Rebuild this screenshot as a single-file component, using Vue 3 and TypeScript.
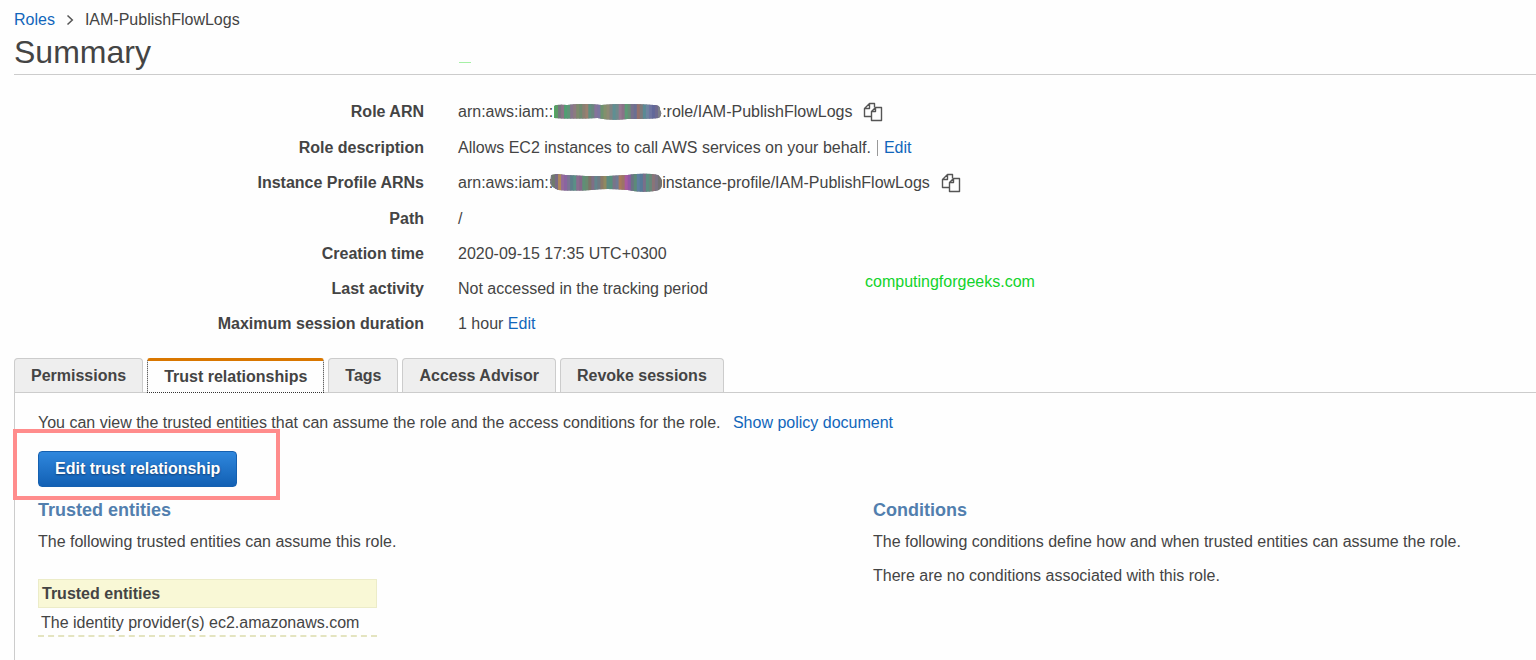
<script setup lang="ts">
interface Part {
  kind: 'text' | 'link' | 'redacted' | 'copy' | 'divider'
  text?: string
}
interface Row {
  label: string
  parts: Part[]
}

const rows: Row[] = [
  {
    label: 'Role ARN',
    parts: [
      { kind: 'text', text: 'arn:aws:iam::' },
      { kind: 'redacted' },
      { kind: 'text', text: ':role/IAM-PublishFlowLogs' },
      { kind: 'copy' },
    ],
  },
  {
    label: 'Role description',
    parts: [
      { kind: 'text', text: 'Allows EC2 instances to call AWS services on your behalf.' },
      { kind: 'divider' },
      { kind: 'link', text: 'Edit' },
    ],
  },
  {
    label: 'Instance Profile ARNs',
    parts: [
      { kind: 'text', text: 'arn:aws:iam::' },
      { kind: 'redacted' },
      { kind: 'text', text: 'instance-profile/IAM-PublishFlowLogs' },
      { kind: 'copy' },
    ],
  },
  { label: 'Path', parts: [{ kind: 'text', text: '/' }] },
  { label: 'Creation time', parts: [{ kind: 'text', text: '2020-09-15 17:35 UTC+0300' }] },
  { label: 'Last activity', parts: [{ kind: 'text', text: 'Not accessed in the tracking period' }] },
  {
    label: 'Maximum session duration',
    parts: [
      { kind: 'text', text: '1 hour\u00a0' },
      { kind: 'link', text: 'Edit' },
    ],
  },
]

const tabs: string[] = ['Permissions', 'Trust relationships', 'Tags', 'Access Advisor', 'Revoke sessions']
const activeTab = 'Trust relationships'

const stripes: Record<number, string[]> = {
  0: [
    '#4fae62', '#5c9a66', '#76757f', '#8a7486', '#4f9f72', '#5f9478', '#86758c', '#8d7a80', '#7d8a6c',
    '#6f8a70', '#8a7f72', '#9a8070', '#5f8f80', '#6a857f', '#85739a', '#7a76a0', '#6d9270', '#83906c',
    '#8e8a74', '#7f8484', '#5f8f93', '#6f8a8c', '#947a90', '#8a7288', '#5d9a76', '#6c8a78', '#77708c',
    '#6a6f93', '#94706c', '#7d7a7c', '#5a8a94', '#6f84a0', '#6e74a0', '#62689a', '#6f6a90', '#7d8088',
  ],
  2: [
    '#6f7a6c', '#7a6a86', '#b0885a', '#946a9a', '#8a64a0', '#7a7494', '#5c7f8a', '#5a8f86', '#8a6c90',
    '#84688a', '#5f8f76', '#6a8a70', '#7d7468', '#7f6f86', '#62858c', '#6f7a84', '#8a7a68', '#8f8a60',
    '#5c8a80', '#56907c', '#7a7488', '#6f7a94', '#a87a5c', '#9c7466', '#a85aa0', '#9058a4', '#6a7484',
    '#5c8a78', '#5f7fa0', '#567a98', '#7a6f8a', '#5a8f80', '#68877a', '#8a7478', '#7a7484', '#717171',
  ],
}
</script>

<template>
  <main class="page">
    <nav class="breadcrumb" aria-label="Breadcrumb">
      <a href="#">Roles</a>
      <svg class="chevron" viewBox="0 0 8 12" aria-hidden="true"><path d="M1.500 1.500 6.300 6 1.500 10.500" /></svg>
      <span>IAM-PublishFlowLogs</span>
    </nav>
    <header class="heading">
      <h1>Summary</h1>
      <span class="mark"></span>
    </header>

    <section class="details">
      <dl>
        <template v-for="(row, r) in rows" :key="row.label">
          <dt>{{ row.label }}</dt>
          <dd :class="{ arn: row.parts.length === 4 }">
            <template v-for="(part, i) in row.parts" :key="i">
              <span v-if="part.kind === 'text'">{{ part.text }}</span>
              <a v-else-if="part.kind === 'link'" href="#">{{ part.text }}</a>
              <span v-else-if="part.kind === 'divider'" class="divider"></span>
              <svg v-else-if="part.kind === 'redacted'" class="redacted" viewBox="0 0 108 20" preserveAspectRatio="none" aria-hidden="true">
                <clipPath :id="'blot' + r">
                  <path v-if="r === 0" d="M1 4Q4 2 14 3Q30 1 48 3Q70 1 100 3Q107 3 106 8Q109 12 105 16Q92 17 74 17Q56 19 44 16Q20 17 1 16Z" />
                  <path v-else d="M-2 2L4 1Q20 3 44 3Q66 3 82 1Q96 0 104 2Q109 6 108 11Q108 17 101 18Q86 20 74 17Q52 15 38 17Q20 18 5 17Q-2 14 -3 10Z" />
                </clipPath>
                <g :clip-path="`url(#blot${r})`">
                  <rect x="-4" y="0" width="112" height="20" fill="#77777f" />
                  <rect v-for="(color, s) in stripes[r]" :key="s" :x="s * 3 - 1" y="0" width="4" height="20" :fill="color" />
                </g>
              </svg>
              <button v-else class="copy" type="button" aria-label="Copy ARN">
                <svg viewBox="0 0 20 20" aria-hidden="true">
                  <path d="M8 14.500H1.500V6.500L6.500 1.500H11.500V5.500M6.500 1.500V6.500H1.500" />
                  <path d="M12.500 5.500H18.500V18.500H8.500V9.500L12.500 5.500V9.500H8.500" />
                </svg>
              </button>
            </template>
          </dd>
        </template>
      </dl>
      <span class="watermark">computingforgeeks.com</span>
    </section>

    <div class="tabs" role="tablist">
      <button v-for="tab in tabs" :key="tab" type="button" role="tab" :aria-selected="tab === activeTab"
        :class="['tab', { active: tab === activeTab }]">{{ tab }}</button>
    </div>

    <section class="panel">
      <p class="intro">You can view the trusted entities that can assume the role and the access conditions for the role. <a href="#">Show policy document</a></p>
      <div class="action">
        <button class="primary" type="button">Edit trust relationship</button>
        <span class="highlight"></span>
      </div>
      <div class="columns">
        <section>
          <h2>Trusted entities</h2>
          <p>The following trusted entities can assume this role.</p>
          <table>
            <thead><tr><th scope="col">Trusted entities</th></tr></thead>
            <tbody><tr><td>The identity provider(s) ec2.amazonaws.com</td></tr></tbody>
          </table>
        </section>
        <section>
          <h2>Conditions</h2>
          <p>The following conditions define how and when trusted entities can assume the role.</p>
          <p>There are no conditions associated with this role.</p>
        </section>
      </div>
    </section>
  </main>
</template>

<style>
body {
  margin: 0;
  background: #fefefe;
}
</style>

<style scoped>
.page {
  display: flex;
  flex-direction: column;
  min-height: 100vh;
  box-sizing: border-box;
  padding: 10px 0 0 14px;
  overflow: hidden;
  font-family: "Liberation Sans", Arial, sans-serif;
  font-size: 16px;
  line-height: 20px;
  color: #444;
}
a {
  color: #1166bb;
  text-decoration: none;
}
h1, h2, p, dl, dd {
  margin: 0;
}
button {
  font: inherit;
  color: inherit;
}
.breadcrumb {
  display: flex;
  align-items: center;
  gap: 11px;
}
.chevron {
  width: 8px;
  height: 12px;
  fill: none;
  stroke: #555;
  stroke-width: 1.5;
}
.heading {
  position: relative;
  border-bottom: 1px solid #ccc;
}
h1 {
  font-size: 32px;
  line-height: 44px;
  font-weight: 400;
}
.mark {
  position: absolute;
  left: 445px;
  top: 32px;
  width: 12px;
  height: 1px;
  background: #a5f0a5;
}
.details {
  position: relative;
  padding: 19px 0 17px;
}
dl {
  display: grid;
  grid-template-columns: 410px 1fr;
  column-gap: 34px;
}
dt {
  line-height: 35px;
  text-align: right;
  font-weight: 700;
}
dd {
  display: flex;
  align-items: center;
  min-height: 35px;
  white-space: nowrap;
}
dd.arn {
  min-height: 36px;
}
.divider {
  width: 1px;
  height: 16px;
  margin: 0 6px;
  background: #999;
}
.redacted {
  width: 109px;
  height: 20px;
  overflow: visible;
}
.copy {
  display: flex;
  margin-left: 11px;
  padding: 0;
  border: 0;
  background: none;
}
.copy svg {
  width: 20px;
  height: 20px;
  fill: none;
  stroke: #555;
  stroke-width: 1.4;
  stroke-linejoin: round;
}
.watermark {
  position: absolute;
  left: 851px;
  top: 197px;
  color: #12d32b;
}
.tabs {
  display: flex;
  gap: 4px;
}
.tab {
  height: 34px;
  padding: 0 16px;
  border: 1px solid #ccc;
  border-bottom: 0;
  border-radius: 4px 4px 0 0;
  background: #eee;
  font-weight: 700;
}
.tab.active {
  position: relative;
  height: 35px;
  margin-bottom: -1px;
  border: 1px dotted #333;
  border-top: 3px solid #d97700;
  border-radius: 3px 3px 0 0;
  background: #fefefe;
}
.panel {
  flex: 1;
  padding: 20px 0 0 23px;
  border: solid #ccc;
  border-width: 1px 0 0 1px;
}
.intro a {
  margin-left: 8px;
}
.action {
  position: relative;
  padding: 18px 0 12px;
}
.primary {
  display: block;
  height: 36px;
  padding: 0 16px;
  border: 1px solid #1560b0;
  border-radius: 4px;
  background: linear-gradient(#2f87dd, #1260b4);
  color: #fff;
  font-weight: 700;
  text-shadow: 0 1px 2px #123c70;
}
.highlight {
  position: absolute;
  left: -25px;
  top: -4px;
  width: 259px;
  height: 63px;
  border: 4px solid #ff8c8c;
  pointer-events: none;
}
.columns {
  display: grid;
  grid-template-columns: 835px 1fr;
}
h2 {
  font-size: 18px;
  line-height: 22px;
  color: #527fae;
}
.columns p {
  margin-top: 10px;
  line-height: 22px;
}
.columns p + p {
  margin-top: 12px;
}
table {
  width: 339px;
  margin-top: 26px;
  border-collapse: separate;
  border-spacing: 0;
}
th {
  padding: 3px;
  border: 1px solid #ececc8;
  background: #f9f8d6;
  text-align: left;
  line-height: 21px;
}
td {
  padding: 5px 3px 2px;
  border-bottom: 2px dashed #e4e4c0;
}
</style>
